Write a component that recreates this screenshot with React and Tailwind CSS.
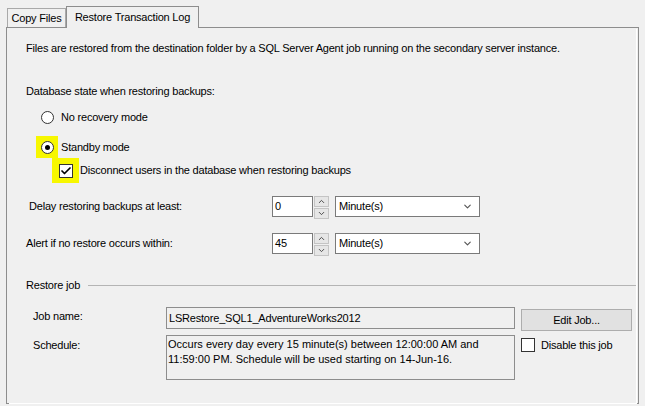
import { ChevronDown, ChevronUp, Check } from 'lucide-react'

function Radio({ checked }) {
  return (
    <span className="w-[13px] h-[13px] rounded-full border border-[#333] bg-white flex items-center justify-center">
      {checked && <span className="w-[5px] h-[5px] rounded-full bg-black" />}
    </span>
  )
}

function Spin({ value }) {
  return (
    <div className="flex h-[21px]">
      <div className="w-[41px] border border-[#7a7a7a] bg-white pl-[2px] leading-[19px]">{value}</div>
      <div className="w-[15px] ml-[1px] flex flex-col gap-[1px]">
        <div className="flex-1 bg-[#e6e6e6] border border-[#c4c4c4] flex items-center justify-center">
          <ChevronUp size={9} strokeWidth={2.5} className="text-[#444]" />
        </div>
        <div className="flex-1 bg-[#e6e6e6] border border-[#c4c4c4] flex items-center justify-center">
          <ChevronDown size={9} strokeWidth={2.5} className="text-[#444]" />
        </div>
      </div>
    </div>
  )
}

function Combo() {
  return (
    <div className="w-[145px] h-[21px] ml-[6px] border border-[#7a7a7a] bg-white flex items-center pl-[3px] pr-[6px]">
      <span className="flex-1">Minute(s)</span>
      <ChevronDown size={11} strokeWidth={2.5} className="text-[#555]" />
    </div>
  )
}

export default function App() {
  return (
    <div className="w-[645px] h-[406px] bg-[#f0f0f0] text-[11px] tracking-[-0.2px] text-black overflow-hidden"
         style={{ fontFamily: '"Liberation Sans", Arial, sans-serif' }}>
      <div className="flex items-end h-[27px] pl-[7px]">
        <div className="h-[19px] w-[59px] border border-b-0 border-[#a9a9a9] bg-[#f0f0f0] flex items-center justify-center pt-[1px]">Copy Files</div>
        <div className="h-[22px] w-[133px] -mb-[1px] relative z-10 border border-b-0 border-[#8d8d8d] bg-[#f0f0f0] flex items-start justify-center pt-[2px]">Restore Transaction Log</div>
      </div>
      <div className="ml-[6px] w-[633px] h-[377px] border border-[#8d8d8d]">
        <div className="h-full border-r border-b border-white ml-[2px] mt-[1px] mr-[1px] mb-[2px] flex flex-col">
          <div className="ml-[17px] mt-[12px] h-[14px] leading-[14px]">
            Files are restored from the destination folder by a SQL Server Agent job running on the secondary server instance.
          </div>
          <div className="ml-[17px] mt-[29px] h-[14px] leading-[14px]">Database state when restoring backups:</div>

          <div className="ml-[32px] mt-[12px] h-[14px] flex items-center gap-[7px]">
            <Radio />
            <span>No recovery mode</span>
          </div>

          <div className="ml-[27px] mt-[12px] h-[22px] flex items-center">
            <span className="w-[22px] h-[22px] bg-[#f7f700] flex items-center justify-center">
              <Radio checked />
            </span>
            <span className="ml-[3px]">Standby mode</span>
          </div>

          <div className="ml-[43px] h-[25px] flex items-center">
            <span className="w-[27px] h-[25px] bg-[#f7f700] flex items-center justify-center">
              <span className="w-[14px] h-[14px] border border-[#333] bg-white flex items-center justify-center">
                <Check size={12} strokeWidth={3.5} className="text-black" />
              </span>
            </span>
            <span className="ml-[1px]">Disconnect users in the database when restoring backups</span>
          </div>

          <div className="mt-[13px] flex items-center h-[21px]">
            <span className="ml-[20px] w-[243px]">Delay restoring backups at least:</span>
            <Spin value="0" />
            <Combo />
          </div>

          <div className="mt-[16px] flex items-center h-[21px]">
            <span className="ml-[17px] w-[246px]">Alert if no restore occurs within:</span>
            <Spin value="45" />
            <Combo />
          </div>

          <div className="mt-[24px] ml-[17px] flex items-center h-[14px]">
            <span>Restore job</span>
            <span className="flex-1 ml-[8px] h-px bg-[#b4b4b4]" />
          </div>

          <div className="mt-[15px] flex">
            <div className="w-[157px] pl-[24px] flex flex-col">
              <span className="mt-[2px] leading-[14px]">Job name:</span>
              <span className="mt-[15px] leading-[14px]">Schedule:</span>
            </div>
            <div className="w-[349px] flex flex-col">
              <div className="h-[22px] border border-[#8d8d8d] bg-[#f0f0f0] pl-[2px] leading-[20px]">LSRestore_SQL1_AdventureWorks2012</div>
              <div className="mt-[6px] h-[45px] border border-[#8d8d8d] bg-[#f0f0f0] pl-[1px] pt-[1px] leading-[15px] tracking-[0px]">
                Occurs every day every 15 minute(s) between 12:00:00 AM and<br />
                11:59:00 PM. Schedule will be used starting on 14-Jun-16.
              </div>
            </div>
            <div className="ml-[6px] flex flex-col">
              <div className="mt-[2px] w-[111px] h-[22px] border border-[#adadad] bg-[#e1e1e1] flex items-center justify-center">Edit Job...</div>
              <div className="mt-[6px] flex items-center">
                <span className="w-[14px] h-[14px] border border-[#333] bg-white" />
                <span className="ml-[6px]">Disable this job</span>
              </div>
            </div>
          </div>
        </div>
      </div>
    </div>
  )
}
